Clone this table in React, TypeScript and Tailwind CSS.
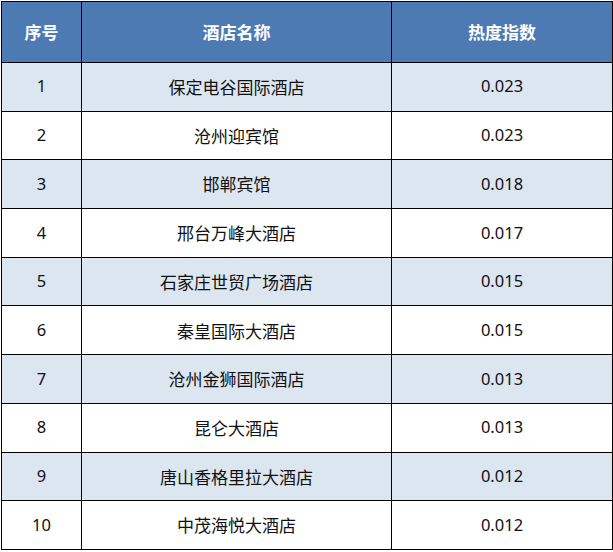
import React from "react";

const rows: [string, string, string][] = [
  ["1", "保定电谷国际酒店", "0.023"],
  ["2", "沧州迎宾馆", "0.023"],
  ["3", "邯郸宾馆", "0.018"],
  ["4", "邢台万峰大酒店", "0.017"],
  ["5", "石家庄世贸广场酒店", "0.015"],
  ["6", "秦皇国际大酒店", "0.015"],
  ["7", "沧州金狮国际酒店", "0.013"],
  ["8", "昆仑大酒店", "0.013"],
  ["9", "唐山香格里拉大酒店", "0.012"],
  ["10", "中茂海悦大酒店", "0.012"],
];

export default function App() {
  return (
    <div
      className="w-[613px] h-[552px] bg-white pt-[1px] pl-[1px]"
      style={{ fontFamily: '"Noto Sans", "Noto Sans CJK SC", sans-serif' }}
    >
      <table className="border-collapse w-[611px] table-fixed text-[16.5px] text-[#111]">
        <colgroup>
          <col className="w-[80px]" />
          <col className="w-[310px]" />
          <col className="w-[221px]" />
        </colgroup>
        <thead>
          <tr className="h-[61px] bg-[#4e7ab3] text-white font-bold">
            <th className="border border-black font-bold text-[17px]" style={{ fontFamily: '"Noto Sans CJK SC", sans-serif' }}>序号</th>
            <th className="border border-black font-bold text-[17px]" style={{ fontFamily: '"Noto Sans CJK SC", sans-serif' }}>酒店名称</th>
            <th className="border border-black font-bold text-[17px]" style={{ fontFamily: '"Noto Sans CJK SC", sans-serif' }}>热度指数</th>
          </tr>
        </thead>
        <tbody>
          {rows.map((r, i) => (
            <tr key={r[0]} className={`h-[48.7px] ${i % 2 === 0 ? "bg-[#dce6f1]" : "bg-white"}`}>
              <td className="border border-black text-center p-0">{r[0]}</td>
              <td className="border border-black text-center p-0 text-[17px]" style={{ fontFamily: '"Noto Sans CJK SC", sans-serif' }}>{r[1]}</td>
              <td className="border border-black text-center p-0">{r[2]}</td>
            </tr>
          ))}
        </tbody>
      </table>
    </div>
  );
}
